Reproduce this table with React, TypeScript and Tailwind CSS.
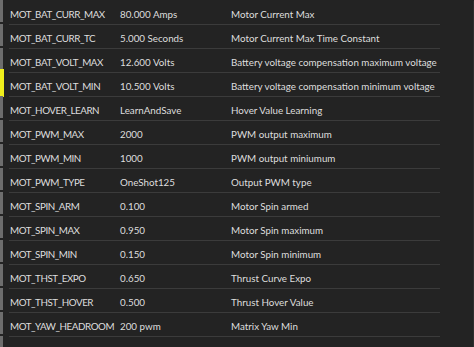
import React from 'react';

const rows = [
  ['MOT_BAT_CURR_MAX', '80.000 Amps', 'Motor Current Max'],
  ['MOT_BAT_CURR_TC', '5.000 Seconds', 'Motor Current Max Time Constant'],
  ['MOT_BAT_VOLT_MAX', '12.600 Volts', 'Battery voltage compensation maximum voltage'],
  ['MOT_BAT_VOLT_MIN', '10.500 Volts', 'Battery voltage compensation minimum voltage'],
  ['MOT_HOVER_LEARN', 'LearnAndSave', 'Hover Value Learning'],
  ['MOT_PWM_MAX', '2000', 'PWM output maximum'],
  ['MOT_PWM_MIN', '1000', 'PWM output miniumum'],
  ['MOT_PWM_TYPE', 'OneShot125', 'Output PWM type'],
  ['MOT_SPIN_ARM', '0.100', 'Motor Spin armed'],
  ['MOT_SPIN_MAX', '0.950', 'Motor Spin maximum'],
  ['MOT_SPIN_MIN', '0.150', 'Motor Spin minimum'],
  ['MOT_THST_EXPO', '0.650', 'Thrust Curve Expo'],
  ['MOT_THST_HOVER', '0.500', 'Thrust Hover Value'],
  ['MOT_YAW_HEADROOM', '200 pwm', 'Matrix Yaw Min'],
  ['', '', ''],
];

const selected = 3;

const App = () => {
  return (
    <div className="h-[347px] w-[474px] overflow-hidden bg-[#232323] pt-px text-[9.8px] text-[#dedede] [font-family:Lato,sans-serif]">
      {rows.map((r, i) => (
        <div key={i} className="flex h-[24px]">
          <div className="w-[9px] shrink-0">
            {i === selected ? (
              <div className="-mt-[4px] h-[28px] w-[4px] bg-[#f0ef1c]" />
            ) : (
              <div className="-mt-px h-[22px] w-[3px] bg-[#6d6d6d]" />
            )}
          </div>
          <div className="flex w-[431px] shrink-0 items-center border-b border-[#3b3b3b] pt-[4px]">
            <div className="w-[111px] shrink-0 whitespace-nowrap pl-px tracking-[-0.45px]">{r[0]}</div>
            <div className="w-[111px] shrink-0 whitespace-nowrap">{r[1]}</div>
            <div className="whitespace-nowrap">{r[2]}</div>
          </div>
          <div className="flex-1" />
          <div className="w-px bg-[#2e2e2e]" />
        </div>
      ))}
    </div>
  );
};

export default App;
